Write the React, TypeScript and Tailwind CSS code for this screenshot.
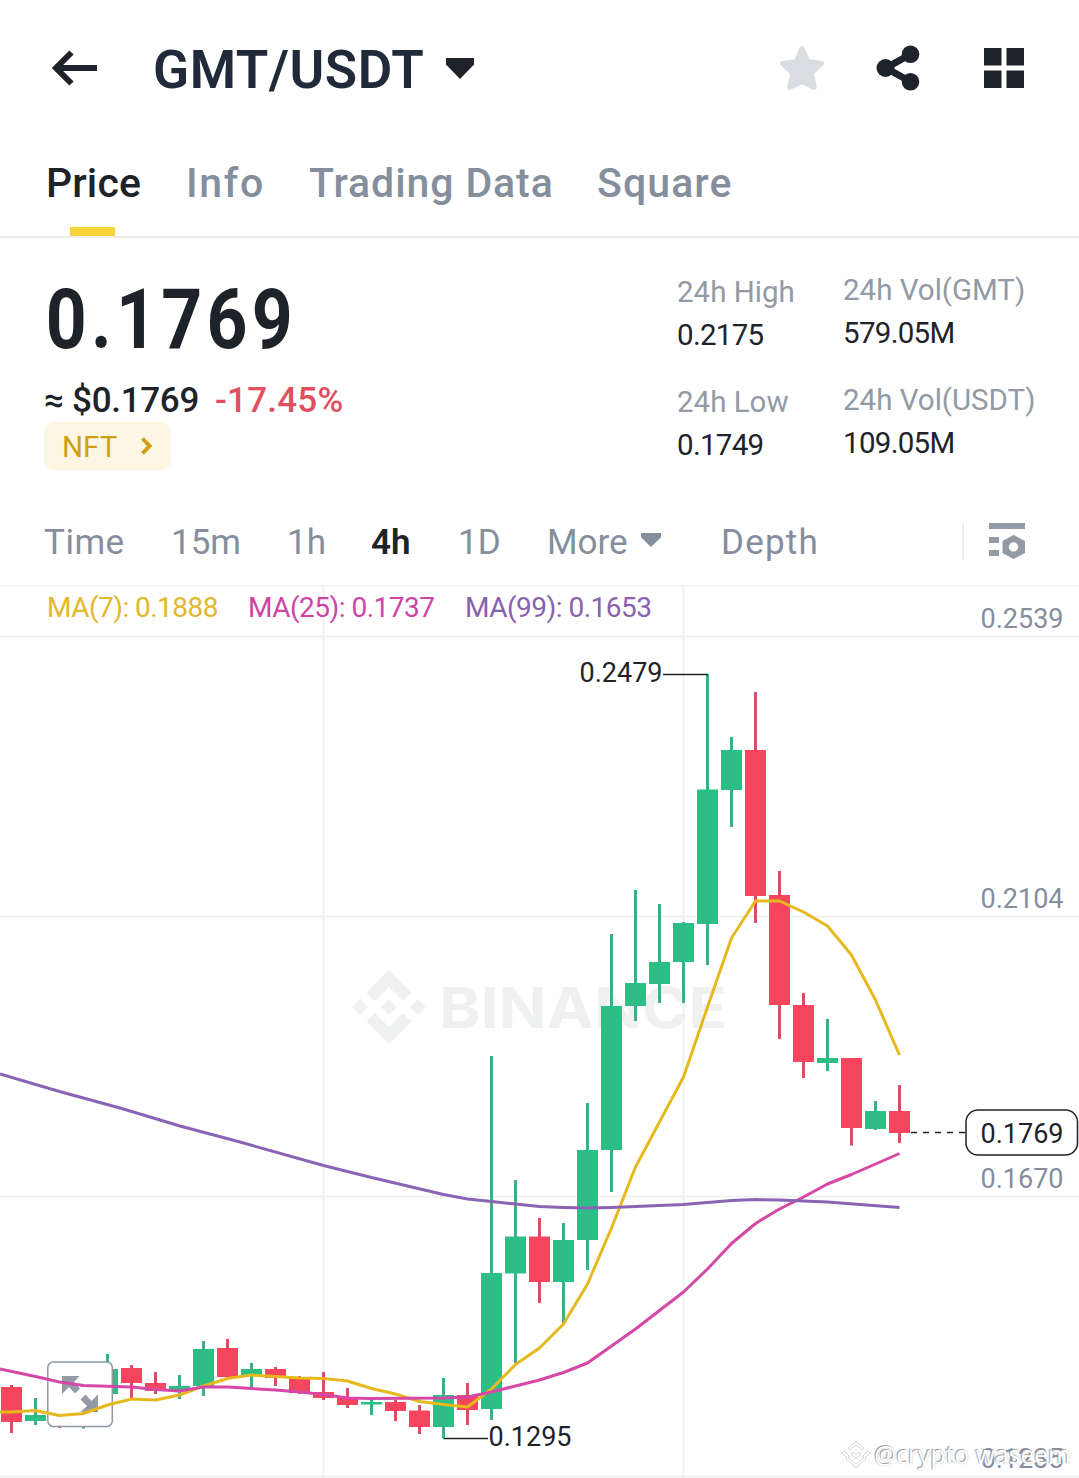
import clsx from "clsx";

type Candle = [high: number, top: number, bottom: number, low: number, up: boolean];

const tabs = [
  { label: "Price", className: "w-[140px] text-[#1e2329] tracking-[0.1px]" },
  { label: "Info", className: "w-[123px] text-[#848e9c] tracking-[1.7px]" },
  { label: "Trading Data", className: "w-[288px] text-[#848e9c] tracking-[0.9px]" },
  { label: "Square", className: "text-[#848e9c] tracking-[1.1px]" },
];

const stats = [
  {
    className: "w-[166px] pt-[2px]",
    rows: [
      { label: "24h High", value: "0.2175" },
      { label: "24h Low", value: "0.1749" },
    ],
  },
  {
    className: "",
    rows: [
      { label: "24h Vol(GMT)", value: "579.05M" },
      { label: "24h Vol(USDT)", value: "109.05M" },
    ],
  },
];

const intervals = [
  { label: "Time", className: "w-[127px] tracking-[0.5px]" },
  { label: "15m", className: "w-[116px]" },
  { label: "1h", className: "w-[84px]" },
  { label: "4h", className: "w-[87px]", active: true },
  { label: "1D", className: "w-[89px]" },
];

// y positions of each candle, 24px apart
const candles: Candle[] = [
  [1385, 1387, 1422, 1433, false],
  [1398, 1415, 1421, 1425, true],
  [1400, 1410, 1420, 1428, false],
  [1390, 1400, 1420, 1428.5, true],
  [1354, 1369, 1394, 1400, true],
  [1365, 1368, 1383, 1399, false],
  [1372, 1383, 1391, 1394, false],
  [1375, 1386, 1390, 1399, true],
  [1341, 1349, 1386, 1396, true],
  [1339, 1348, 1377, 1378, false],
  [1363, 1369, 1375, 1388, true],
  [1367, 1369, 1378, 1386, false],
  [1376, 1378, 1393, 1394, false],
  [1372, 1392, 1398, 1400, false],
  [1388, 1397, 1405, 1408, false],
  [1400, 1402, 1404.5, 1415, true],
  [1400, 1402, 1411, 1421, false],
  [1405, 1410.5, 1427, 1434, false],
  [1378, 1395, 1427, 1438, true],
  [1383, 1395, 1410, 1425, false],
  [1056, 1273, 1409, 1420, true],
  [1180, 1236.5, 1273.5, 1363, true],
  [1218, 1236.5, 1282, 1303, false],
  [1223, 1240, 1282, 1323, true],
  [1103, 1150, 1240, 1270, true],
  [934, 1006, 1150, 1192, true],
  [890, 983, 1006, 1021, true],
  [904, 962, 984, 1003, true],
  [922, 923, 962, 1003, true],
  [674, 789.5, 924, 965, true],
  [737, 750, 790, 827, true],
  [692, 750, 896, 923, false],
  [871, 895, 1005, 1039, false],
  [993, 1005, 1062, 1078, false],
  [1019, 1058, 1063, 1071, true],
  [1058, 1058, 1128, 1145.5, false],
  [1101, 1111, 1129, 1130, true],
  [1085, 1111, 1133, 1143, false],
];

const ma7 =
  "0,1412 11.5,1412 35.5,1410.5 59.5,1415.5 83.5,1413.5 107.5,1405 131.5,1399 155.5,1400 179.5,1395 203.5,1386 227.5,1378.5 251.5,1375 275.5,1376.5 299.5,1378 323.5,1378.5 347.5,1381 371.5,1388.5 395.5,1394 419.5,1401.5 443.5,1404.5 467.5,1407 491.5,1389 515.5,1364.5 539.5,1348 563.5,1324 587.5,1284 611.5,1228 635.5,1167 659.5,1122 683.5,1077 707.5,1007 731.5,938 755.5,901 779.5,901 803.5,912 827.5,926 851.5,955 875.5,1000 899.5,1055";
const ma25 =
  "0,1369 35.5,1376.5 59.5,1382 83.5,1385.5 131.5,1387 155.5,1389.5 179.5,1391 203.5,1387 227.5,1387 275.5,1390 299.5,1392 323.5,1394.5 347.5,1398 371.5,1398.5 443.5,1398 467.5,1397 491.5,1392 515.5,1386 539.5,1380 563.5,1372.5 587.5,1363 635.5,1329 683.5,1292 707.5,1269 731.5,1243.5 755.5,1223.5 779.5,1209 803.5,1197 827.5,1184 851.5,1174.5 899.5,1153.5";
const ma99 =
  "0,1074 59.5,1091.5 120,1108 180,1126 240,1142 323.5,1165.5 371.5,1177.5 443.5,1194.5 467.5,1199 491.5,1201.5 539.5,1206.5 563.5,1207.5 587.5,1208 611.5,1207.5 683.5,1204.5 731.5,1200.5 755.5,1199.5 779.5,1200 827.5,1202 899.5,1207.5";

const axis = [
  { y: 628, label: "0.2539" },
  { y: 908, label: "0.2104" },
  { y: 1188, label: "0.1670" },
  { y: 1468, label: "0.1235" },
];

function Caret({ className }: { className: string }) {
  return (
    <svg viewBox="0 0 28 21" className={className} fill="currentColor" preserveAspectRatio="none">
      <path d="M0 0h28v6.5L14 21 0 6.5z" />
    </svg>
  );
}

function Header() {
  return (
    <header className="flex h-[136px] items-center pl-[51px] pr-[55px] text-[#1e2329]">
      <svg viewBox="0 0 46 36" className="h-9 w-[46px]" fill="none" stroke="currentColor" strokeWidth="6">
        <path d="M46 18H5M20.5 2.5 5 18l15.5 15.5" />
      </svg>
      <h1 className="ml-14 mt-1 w-[293px] whitespace-nowrap text-[53px] font-semibold leading-none tracking-[0.5px] text-[#202a3a]">
        GMT/USDT
      </h1>
      <Caret className="h-[21px] w-7" />
      <svg viewBox="0 0 44 46" className="ml-auto h-[46px] w-11 text-[#d9dce1]" fill="currentColor" stroke="currentColor" strokeWidth="5" strokeLinejoin="round">
        <path d="M22 3.5 27.7 16.5 41.5 18.5 31.3 27.8 34.3 42.5 22 36.5 9.7 42.5 12.7 27.8 2.5 18.5 16.3 16.5z" />
      </svg>
      <svg viewBox="0 0 44 46" className="ml-[52px] h-[46px] w-11" fill="currentColor" stroke="currentColor">
        <path d="M35 9 10 23l25 14" fill="none" strokeWidth="7" />
        <circle cx="34.5" cy="9.2" r="8.8" stroke="none" />
        <circle cx="9.5" cy="23" r="9" stroke="none" />
        <circle cx="34.5" cy="36.8" r="8.8" stroke="none" />
      </svg>
      <svg viewBox="0 0 40 40" className="ml-16 size-10" fill="currentColor">
        <path d="M0 0h17.5v17.5H0zM22.500 0H40v17.5H22.5zM0 22.5h17.5V40H0zM22.5 22.5H40V40H22.5z" />
      </svg>
    </header>
  );
}

function Tabs() {
  return (
    <nav className="flex h-[102px] border-b-2 border-[#eaecee] pl-[46px] text-[41px] font-medium leading-[94px]">
      {tabs.map((tab, index) => (
        <div key={tab.label} className={clsx("relative whitespace-nowrap", tab.className)}>
          {tab.label}
          {index === 0 && <span className="absolute bottom-0 left-6 h-[9px] w-[45px] bg-[#fad338]" />}
        </div>
      ))}
    </nav>
  );
}

function Summary() {
  return (
    <section className="flex h-[262px] pl-11">
      <div className="w-[633px] text-[#1e2329]">
        <div className="origin-left scale-x-[0.86] pl-[2px] pt-[41px] text-[83px] font-bold leading-[82px] tracking-[5px]">
          0.1769
        </div>
        <div className="mt-5 flex h-10 items-center whitespace-nowrap text-[35px] font-medium leading-10">
          <span className="w-[171px] tracking-[-0.3px]">≈ $0.1769</span>
          <span className="tracking-[0.2px] text-[#e24f62]">-17.45%</span>
        </div>
        <div className="mt-px flex h-12 w-[127px] items-center rounded-[10px] bg-[#fdf6e3] pl-[18px] text-[29.5px] text-[#cf9f18]">
          <span className="w-[79px] pt-0.5">NFT</span>
          <svg viewBox="0 0 11 18" className="h-[18px] w-[11px]" fill="none" stroke="currentColor" strokeWidth="4">
            <path d="m1.5 1.5 7 7.5-7 7.5" />
          </svg>
        </div>
      </div>
      {stats.map((column, index) => (
        <div key={index} className={clsx("mt-[31px] whitespace-nowrap text-[29.5px] leading-[43px]", column.className)}>
          {column.rows.map((row) => (
            <div key={row.label} className="h-[110px]">
              <div className="text-[#929aa5]">{row.label}</div>
              <div className="tracking-[-0.7px] text-[#1e2329]">{row.value}</div>
            </div>
          ))}
        </div>
      ))}
    </section>
  );
}

function Intervals() {
  return (
    <div className="flex h-[85px] items-center whitespace-nowrap pl-11 text-[35px] leading-[84px] text-[#848e9c]">
      {intervals.map((item) => (
        <div key={item.label} className={clsx(item.className, item.active && "font-semibold text-[#1e2329]")}>
          {item.label}
        </div>
      ))}
      <div className="w-[94px]">More</div>
      <Caret className="mb-1.5 h-[14px] w-5" />
      <div className="ml-[60px] tracking-[1.2px]">Depth</div>
      <div className="mb-1 ml-auto h-9 w-0.5 bg-[#eaecef]" />
      <svg viewBox="0 0 36 36" className="mb-1 ml-[25px] mr-[54px] size-9 text-[#929aa5]" fill="currentColor">
        <path d="M0 0h36v6H0zM0 14h10v6H0zM0 27h10v6H0z" />
        <path
          fillRule="evenodd"
          d="M24.5 12 36 18v12l-11.5 6-11-6V18zM24.500 19.300a4.700 4.700 0 1 0 0 9.400 4.700 4.700 0 1 0 0-9.400z"
        />
      </svg>
    </div>
  );
}

function Chart() {
  return (
    <svg viewBox="0 585 1079 893" className="block h-[893px] w-full text-[28px]" fill="none">
      {/* Grid */}
      <path
        d="M0 585.500H1079M0 636.500H1079M0 916.500H1079M0 1196.500H1079M0 1476.500H1079M323.500 585V1478M683.500 585V1478"
        stroke="#eff1f2"
        strokeWidth="2"
      />

      {/* Logo behind the candles */}
      <g fill="#eff1f1">
        <path d="M389 970 411.500 992.500 403 1001 389 987 375 1001 366.500 992.500z" />
        <path d="M389 1044 411.500 1021.500 403 1013 389 1027 375 1013 366.500 1021.500z" />
        <path d="m360 999 8 8-8 8-8-8zM418 999l8 8-8 8-8-8zM389 999l8 8-8 8-8-8z" />
        <text x="439" y="1028" textLength="288" lengthAdjust="spacingAndGlyphs" className="font-['Inter'] text-[57px] font-bold">
          BINANCE
        </text>
      </g>

      {/* Axis */}
      <g fill="#848e9c">
        {axis.map((item) => (
          <text key={item.label} x="980.5" y={item.y} textLength="83" lengthAdjust="spacingAndGlyphs">
            {item.label}
          </text>
        ))}
      </g>

      {/* Indicators */}
      <text x="47" y="617" textLength="171.500" fill="#e3b72b">MA(7): 0.1888</text>
      <text x="248" y="617" textLength="187" fill="#d045a4">MA(25): 0.1737</text>
      <text x="465" y="617" textLength="187" fill="#8862ae">MA(99): 0.1653</text>

      {candles.map(([high, top, bottom, low, up], index) => {
        const x = 11.5 + index * 24;
        return (
          <g key={index}>
            <path d={`M${x} ${high}V${low}`} stroke={up ? "#3fae82" : "#d64f63"} strokeWidth="3" />
            <rect x={x - 10.5} y={top} width="21" height={bottom - top} fill={up ? "#2ebd85" : "#f6465d"} />
          </g>
        );
      })}

      {/* Expand button */}
      <rect x="47.8" y="1362" width="64.5" height="64.5" rx="5.5" fill="#fff" stroke="#8f98a2" strokeWidth="1.5" />
      <g fill="#929aa5">
        <path d="M62 1376h17.500l-5.500 6 6 6.500-5 5-6-6.500-7 7z" />
        <path d="M98 1412H80.500l6.500-6-6.500-6.500 5-5 6 6.500 6.500-6.500z" />
      </g>

      <g strokeWidth="3" strokeLinejoin="round">
        <polyline points={ma7} stroke="#e6b91e" />
        <polyline points={ma25} stroke="#d648a8" />
        <polyline points={ma99} stroke="#8a64b4" />
      </g>

      {/* High and low markers */}
      <g fill="#1e2329">
        <path d="M663 674.500H708M443.500 1438.500H488" stroke="#1e2329" strokeWidth="1.500" />
        <text x="579.5" y="682" textLength="83" lengthAdjust="spacingAndGlyphs">0.2479</text>
        <text x="488.5" y="1446" textLength="83" lengthAdjust="spacingAndGlyphs">0.1295</text>
      </g>

      {/* Last price */}
      <path d="M911 1132.500H966" stroke="#1e2329" strokeWidth="1.500" strokeDasharray="6 6" />
      <rect x="966" y="1110" width="111.500" height="45" rx="12" fill="#fff" stroke="#1e2329" strokeWidth="1.500" />
      <text x="980.5" y="1143" textLength="83" lengthAdjust="spacingAndGlyphs" fill="#1e2329">0.1769</text>
    </svg>
  );
}

function Watermark() {
  return (
    <div className="absolute bottom-[7px] right-2 flex h-8 items-center gap-1 whitespace-nowrap">
      <svg viewBox="0 0 28 28" className="size-7 drop-shadow-[0_0_0.700px_#444]" fill="none" stroke="#fff" strokeWidth="2.500">
        <path d="m7 8 7-6 7 6M1 11l5 5M27 11l-5 5M10 12l4 4 4-4M5 17l9 8 9-8" />
      </svg>
      <span className="font-['Noto_Sans'] text-[24.500px] leading-8 text-white [text-shadow:-1px_-1px_1px_#999,0_0_1px_#aaa]">
        @crypto waseem
      </span>
    </div>
  );
}

export default function App() {
  return (
    <main className="relative h-[1478px] w-[1079px] overflow-hidden bg-white font-['Roboto',sans-serif]">
      <Header />
      <Tabs />
      <Summary />
      <Intervals />
      <Chart />
      <Watermark />
    </main>
  );
}
